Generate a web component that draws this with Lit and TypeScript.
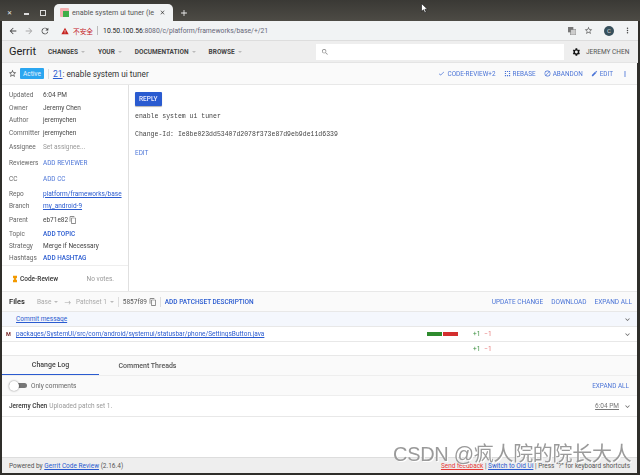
import { LitElement, css, html, svg } from 'lit'
import { customElement } from 'lit/decorators.js'

const icon = (d: string, size = 8, fill = 'currentColor') => html`
   <svg class="ico" width=${size} height=${size} viewBox="0 0 24 24" fill=${fill}>${svg`<path d=${d}></path>`}</svg>
`

const ICONS = {
   back: 'M20 11H7.8l5.6-5.6L12 4l-8 8 8 8 1.4-1.4L7.8 13H20z',
   forward: 'M4 11h12.2l-5.6-5.6L12 4l8 8-8 8-1.4-1.4 5.6-5.6H4z',
   reload: 'M17.6 6.4A8 8 0 1 0 19.7 14h-2.1a6 6 0 1 1-1.4-6.2L13 11h7V4z',
   star: 'M22 9.2l-7.2-.6L12 2 9.2 8.6 2 9.2l5.5 4.7L5.8 21l6.2-3.7 6.2 3.7-1.7-7.1zM12 15.4l-3.8 2.3 1-4.3-3.3-2.9 4.4-.4L12 6.1l1.7 4 4.4.4-3.3 2.9 1 4.3z',
   check: 'M9 16.2L4.8 12l-1.4 1.4L9 19 21 7l-1.4-1.4z',
   edit: 'M3 17.2V21h3.8L17.8 9.9l-3.7-3.7zM20.7 7a1 1 0 0 0 0-1.4l-2.3-2.3a1 1 0 0 0-1.4 0l-1.8 1.8 3.7 3.7z',
   ban: 'M12 2a10 10 0 1 0 0 20 10 10 0 0 0 0-20zM4 12a8 8 0 0 1 12.9-6.3L5.7 16.9A8 8 0 0 1 4 12zm8 8a8 8 0 0 1-4.9-1.7L18.3 7.1A8 8 0 0 1 12 20z',
   rebase: 'M3 3h4v4H3zm7 0h4v4h-4zm7 0h4v4h-4zM3 10h4v4H3zm14 0h4v4h-4zM3 17h4v4H3zm7 0h4v4h-4zm7 0h4v4h-4z',
   more: 'M12 8a2 2 0 1 0 0-4 2 2 0 0 0 0 4zm0 2a2 2 0 1 0 0 4 2 2 0 0 0 0-4zm0 6a2 2 0 1 0 0 4 2 2 0 0 0 0-4z',
   gear: 'M19.4 13a7.5 7.5 0 0 0 0-2l2.1-1.6-2-3.5-2.5 1a7.5 7.5 0 0 0-1.7-1L14.9 3h-4l-.4 2.9a7.5 7.5 0 0 0-1.7 1l-2.5-1-2 3.5L6.4 11a7.5 7.5 0 0 0 0 2l-2.1 1.6 2 3.5 2.5-1a7.5 7.5 0 0 0 1.7 1l.4 2.9h4l.4-2.9a7.5 7.5 0 0 0 1.7-1l2.5 1 2-3.5zM12.9 15.5a3.5 3.5 0 1 1 0-7 3.5 3.5 0 0 1 0 7z',
   search: 'M15.5 14h-.8l-.3-.3a6.5 6.5 0 1 0-.7.7l.3.3v.8l5 5 1.5-1.5zm-6 0a4.5 4.5 0 1 1 0-9 4.5 4.5 0 0 1 0 9z',
   copy: 'M16 1H4a2 2 0 0 0-2 2v14h2V3h12zm3 4H8a2 2 0 0 0-2 2v14a2 2 0 0 0 2 2h11a2 2 0 0 0 2-2V7a2 2 0 0 0-2-2zm0 16H8V7h11z',
   chevron: 'M7.4 8.6L12 13.2l4.6-4.6L18 10l-6 6-6-6z',
   hourglass: 'M6 2v6l4 4-4 4v6h12v-6l-4-4 4-4V2z',
   plus: 'M19 13h-6v6h-2v-6H5v-2h6V5h2v6h6z',
   close: 'M19 6.4L17.6 5 12 10.6 6.4 5 5 6.4 10.6 12 5 17.6 6.4 19 12 13.4 17.6 19 19 17.6 13.4 12z',
}

const NAV = ['CHANGES', 'YOUR', 'DOCUMENTATION', 'BROWSE']

const META_TOP = [
   { k: 'Updated', v: html`6:04 PM`, h: 12 },
   { k: 'Owner', v: html`Jeremy Chen`, h: 13 },
   { k: 'Author', v: html`jeremychen`, h: 12 },
   { k: 'Committer', v: html`jeremychen`, h: 13 },
   { k: 'Assignee', v: html`<span class="hint">Set assignee...</span>`, h: 15 },
   { k: 'Reviewers', v: html`<span class="action">ADD REVIEWER</span>`, h: 17 },
   { k: 'CC', v: html`<span class="action">ADD CC</span>`, h: 16 },
   { k: 'Repo', v: html`<span class="link">platform/frameworks/base</span>`, h: 13 },
   { k: 'Branch', v: html`<span class="link">my_android-9</span>`, h: 12 },
   { k: 'Parent', v: html`eb71e82 ${icon(ICONS.copy, 8, '#666')}`, h: 15 },
   { k: 'Topic', v: html`<span class="action strong">ADD TOPIC</span>`, h: 13 },
   { k: 'Strategy', v: html`Merge if Necessary`, h: 12 },
   { k: 'Hashtags', v: html`<span class="action strong">ADD HASHTAG</span>`, h: 12 },
]

@customElement('app-root')
export class AppRoot extends LitElement {

   renderChrome() {
      return html`
         <div class="titlebar">
            <div class="win-btns">
               <span class="win-x">✕</span>
               <span class="win-min"></span>
               <span class="win-max"></span>
            </div>
            <div class="tab">
               <svg class="favicon" width="9" height="9" viewBox="0 0 9 9">
                  <rect width="9" height="9" rx="1" fill="#f3b0b0"></rect>
                  <rect x="3" y="3" width="6" height="6" fill="#3fae49"></rect>
               </svg>
               <span class="tab-title">enable system ui tuner (le</span>
               ${icon(ICONS.close, 7, '#444')}
            </div>
            <span class="new-tab">${icon(ICONS.plus, 10, '#eee')}</span>
            <svg class="cursor" width="7" height="11" viewBox="0 0 7 11">
               <path d="M0.5 0.5v8l2-1.7 1.3 3 1.4-.6-1.3-3h2.6z" fill="#fff" stroke="#111" stroke-width=".6"></path>
            </svg>
         </div>
         <div class="toolbar">
            <span class="tb-ico">${icon(ICONS.back, 10, '#444')}</span>
            <span class="tb-ico">${icon(ICONS.forward, 10, '#aaa')}</span>
            <span class="tb-ico">${icon(ICONS.reload, 10, '#444')}</span>
            <svg class="warn" width="8" height="8" viewBox="0 0 24 24">
               <path d="M12 2L1 22h22z" fill="#c5221f"></path><rect x="11" y="9" width="2" height="7" fill="#fff"></rect><rect x="11" y="17" width="2" height="2" fill="#fff"></rect>
            </svg>
            <span class="insecure">不安全</span>
            <span class="url-sep"></span>
            <span class="url"><b>10.50.100.56</b>:8080/c/platform/frameworks/base/+/21</span>
            <span class="spacer"></span>
            <svg class="translate" width="8" height="8" viewBox="0 0 9 9">
               <rect width="6" height="6" fill="#777"></rect><rect x="3" y="3" width="6" height="6" fill="#ccc" stroke="#777" stroke-width=".6"></rect>
            </svg>
            ${icon(ICONS.star, 9, '#555')}
            <span class="avatar">C</span>
            ${icon(ICONS.more, 9, '#444')}
         </div>
      `
   }

   renderHeader() {
      return html`
         <header class="gerrit">
            <span class="brand">Gerrit</span>
            <nav class="nav">
               ${NAV.map(n => html`<span class="nav-item">${n}<i class="caret"></i></span>`)}
            </nav>
            <div class="search">${icon(ICONS.search, 8, '#888')}</div>
            ${icon(ICONS.gear, 10, '#111')}
            <span class="user">JEREMY CHEN</span>
         </header>
      `
   }

   renderChangeBar() {
      return html`
         <div class="changebar">
            ${icon(ICONS.star, 9, '#444')}
            <span class="active">Active</span>
            <span class="bar-sep"></span>
            <span class="subject"><span class="link big">21</span>: enable system ui tuner</span>
            <span class="spacer"></span>
            <div class="actions">
               <span>${icon(ICONS.check, 7)}CODE-REVIEW+2</span>
               <span>${icon(ICONS.rebase, 7, '#2a5bd0')}REBASE</span>
               <span>${icon(ICONS.ban, 7, '#2a5bd0')}ABANDON</span>
               <span>${icon(ICONS.edit, 7, '#2a5bd0')}EDIT</span>
               ${icon(ICONS.more, 8, '#2a5bd0')}
            </div>
         </div>
      `
   }

   renderMain() {
      return html`
         <section class="main">
            <aside class="meta">
               <div class="meta-rows">
                  ${META_TOP.map(r => html`
                     <div class="meta-row" style="height:${r.h}px">
                        <span class="meta-key">${r.k}</span>
                        <span class="meta-val">${r.v}</span>
                     </div>
                  `)}
               </div>
               <div class="labels">
                  ${icon(ICONS.hourglass, 8, '#f29900')}
                  <span class="label-name">Code-Review</span>
                  <span class="hint">No votes.</span>
               </div>
            </aside>
            <div class="message">
               <span class="reply">REPLY</span>
               <pre class="commit">enable system ui tuner</pre>
               <pre class="commit">Change-Id: Ie8be023dd53407d2078f373e87d9eb9de11d6339</pre>
               <span class="action">EDIT</span>
            </div>
         </section>
      `
   }

   renderFiles() {
      return html`
         <div class="files-head">
            <b class="files-title">Files</b>
            <span class="select">Base<i class="caret"></i></span>
            <span class="select arrow">→</span>
            <span class="select last">Patchset 1<i class="caret"></i></span>
            <span class="bar-sep"></span>
            <span class="sha">5857f89 ${icon(ICONS.copy, 8, '#666')}</span>
            <span class="bar-sep"></span>
            <span class="action strong">ADD PATCHSET DESCRIPTION</span>
            <span class="spacer"></span>
            <div class="file-actions">
               <span class="action">UPDATE CHANGE</span>
               <span class="action">DOWNLOAD</span>
               <span class="action">EXPAND ALL</span>
            </div>
         </div>
         <div class="file-row commit-row">
            <span class="link">Commit message</span>
            <span class="spacer"></span>
            ${icon(ICONS.chevron, 9, '#666')}
         </div>
         <div class="file-row">
            <b class="status">M</b>
            <span class="link">packages/SystemUI/src/com/android/systemui/statusbar/phone/SettingsButton.java</span>
            <span class="spacer"></span>
            <span class="delta"><i class="green"></i><i class="red"></i></span>
            <span class="counts"><span class="plus">+1</span><span class="minus">−1</span></span>
            ${icon(ICONS.chevron, 9, '#666')}
         </div>
         <div class="file-row total-row">
            <span class="spacer"></span>
            <span class="counts"><span class="plus">+1</span><span class="minus">−1</span></span>
         </div>
      `
   }

   renderLog() {
      return html`
         <div class="tabs">
            <span class="log-tab on">Change Log</span>
            <span class="log-tab">Comment Threads</span>
         </div>
         <div class="only">
            <span class="toggle"><i></i></span>
            <span>Only comments</span>
            <span class="spacer"></span>
            <span class="action">EXPAND ALL</span>
         </div>
         <div class="log-row">
            <b class="author">Jeremy Chen</b>
            <span class="hint">Uploaded patch set 1.</span>
            <span class="spacer"></span>
            <span class="time">6:04 PM</span>
            ${icon(ICONS.chevron, 9, '#666')}
         </div>
      `
   }

   render() {
      return html`
         <div class="window">
            <div class="page">
               ${this.renderChrome()}
               ${this.renderHeader()}
               ${this.renderChangeBar()}
               ${this.renderMain()}
               ${this.renderFiles()}
               ${this.renderLog()}
               <span class="spacer"></span>
               <footer class="foot">
                  <span>Powered by <span class="link">Gerrit Code Review</span> (2.16.4)</span>
                  <span class="spacer"></span>
                  <span class="foot-right"><span class="feedback">Send feedback</span> | <span class="link">Switch to Old UI</span> | Press “?” for keyboard shortcuts</span>
               </footer>
            </div>
            <div class="watermark">CSDN @疯人院的院长大人</div>
         </div>
      `
   }

   static styles = css`
   :host {
      display: block;
      width: 640px;
      height: 475px;
      background: #2f2e2a;
      font-family: Roboto, "Noto Sans CJK SC", sans-serif;
      font-size: 6.5px;
      color: #333;
      overflow: hidden;
   }
   * { box-sizing: border-box; }
   .window {
      position: relative;
      margin: 0 3px 2px 2px;
      height: 473px;
      background: #fff;
   }
   .page {
      height: 100%;
      display: flex;
      flex-direction: column;
      filter: blur(0.3px);
   }
   .spacer { flex: 1; }
   .ico { flex: none; display: block; }
   .titlebar {
      height: 21px;
      margin: 0 -3px 0 -2px;
      padding-top: 4px;
      display: flex;
      background: linear-gradient(#3a3935, #4d4b45);
      position: relative;
      flex: none;
   }
   .win-btns { width: 54px; display: flex; align-items: center; gap: 11px; padding-left: 7px; }
   .win-x { color: #eee; font-size: 6px; width: 6px; }
   .win-min { width: 5px; height: 1.5px; margin-top: 3px; background: #ddd; }
   .win-max { width: 6px; height: 6px; border: 1.5px solid #ddd; }
   .tab {
      width: 119px;
      background: #f1f3f4;
      border-radius: 5px 5px 0 0;
      display: flex;
      align-items: center;
      padding: 0 7px 0 6px;
      gap: 3px;
      font-size: 7.2px;
      color: #555;
   }
   .tab-title { flex: 1; white-space: nowrap; }
   .new-tab { margin-left: 6px; display: flex; align-items: center; }
   .cursor { position: absolute; left: 421px; top: 3px; }
   .toolbar {
      height: 20px;
      flex: none;
      background: #f1f3f4;
      display: flex;
      align-items: center;
      padding: 0 6px 0 6px;
      border-bottom: 1px solid #ddd;
      margin-right: -1px;
   }
   .tb-ico { width: 16px; display: flex; }
   .warn { margin-left: 5px; }
   .insecure { margin-left: 4px; color: #c5221f; font-size: 6.7px; }
   .url-sep { width: 1px; height: 9px; background: #bbb; margin: 0 5px 0 4px; }
   .url { font-size: 6.8px; color: #667; }
   .url b { font-weight: 400; color: #222; }
   .translate { margin-right: 8px; }
   .avatar {
      width: 10px; height: 10px; border-radius: 50%;
      background: #37505c; color: #ddd; font-size: 6px;
      display: flex; align-items: center; justify-content: center;
      margin: 0 9px 0 11px;
   }
   .gerrit {
      height: 22px;
      flex: none;
      background: #eee;
      display: flex;
      align-items: center;
      padding: 0 3px 0 7px;
      border-bottom: 1px solid #e4e4e4;
      margin-right: -1px;
   }
   .brand { font-size: 11px; color: #222; width: 39px; }
   .nav { display: flex; width: 268px; }
   .nav-item { font-size: 6.5px; font-weight: 700; color: #444; margin-right: 13px; white-space: nowrap; display: flex; align-items: center; }
   .caret {
      display: inline-block; width: 0; height: 0;
      border: 2.5px solid transparent; border-top: 2.5px solid #bbb; border-bottom: 0;
      margin-left: 3px;
   }
   .search {
      width: 248px; height: 16px; background: #fff;
      display: flex; align-items: center; padding-left: 5px; margin-right: 7px;
   }
   .user { font-size: 6.5px; color: #555; margin-left: 5px; white-space: nowrap; }
   .changebar {
      height: 22px;
      flex: none;
      display: flex;
      align-items: center;
      padding: 0 8px 0 6px;
      background: #fafafa;
      border-bottom: 1px solid #e8e8e8;
   }
   .active {
      background: #2ba6f0; color: #e8f4ff; font-size: 6.5px;
      padding: 1.5px 3px; border-radius: 1px; margin-left: 3px;
   }
   .bar-sep { width: 1px; height: 10px; background: #ddd; margin: 0 4px; flex: none; }
   .subject { font-size: 8.2px; color: #333; }
   .link { color: #2a5bd0; text-decoration: underline; }
   .big { font-size: 8.5px; }
   .actions { display: flex; align-items: center; gap: 8px; color: #2a5bd0; font-size: 6.4px; }
   .actions span { display: flex; align-items: center; gap: 2px; opacity: .85; }
   .main { height: 207px; flex: none; display: flex; border-bottom: 1px solid #e8e8e8; }
   .meta { width: 127px; flex: none; border-right: 1px solid #e0e0e0; display: flex; flex-direction: column; padding-top: 4px; }
   .meta-rows { padding: 0 0 0 7px; border-bottom: 1px solid #eee; height: 177px; }
   .meta-row { display: flex; align-items: center; }
   .meta-key { width: 34px; color: #666; flex: none; }
   .meta-val { color: #444; display: flex; align-items: center; gap: 1px; white-space: nowrap; }
   .hint { color: #999; }
   .action { color: #2a5bd0; font-size: 6.4px; opacity: .85; white-space: nowrap; }
   .strong { font-weight: 500; opacity: 1; }
   .labels { display: flex; align-items: center; padding: 0 14px 0 9px; flex: 1; gap: 1px; }
   .label-name { font-weight: 500; color: #333; flex: 1; }
   .message { flex: 1; padding: 7px 6px; display: flex; flex-direction: column; align-items: flex-start; }
   .reply {
      background: #2a5bd0; color: #eef; font-size: 6.5px; font-weight: 500;
      padding: 3px 4px; border-radius: 1px; box-shadow: 0 1px 1px rgba(0,0,0,.3);
      margin-bottom: 7px;
   }
   .commit {
      margin: 0 0 11px;
      font: 6.5px/7px "Liberation Mono", "DejaVu Sans Mono", monospace;
      color: #444;
   }
   .files-head {
      height: 20px; flex: none; display: flex; align-items: center;
      padding: 0 5px 0 7px; background: #fafafa; border-bottom: 1px solid #e8e8e8;
   }
   .files-head .bar-sep { margin: 0 4px 0 4px; }
   .files-head .action { font-size: 6.5px; }
   .files-title { font-size: 7.5px; color: #222; font-weight: 500; width: 28px; }
   .select { color: #aaa; display: flex; align-items: center; margin-right: 4px; }
   .select.last { margin-right: 0; }
   .arrow { margin-left: 2px; margin-right: 5px; }
   .sha { color: #555; display: flex; align-items: center; gap: 2px; width: 33px; }
   .file-actions { display: flex; gap: 8px; }
   .file-row {
      height: 15px; flex: none; display: flex; align-items: center;
      padding: 0 5px 0 14px; border-bottom: 1px solid #e8e8e8; position: relative;
   }
   .commit-row { background: #f4f7fd; }
   .status { position: absolute; left: 4px; color: #7a2a2a; font-size: 5.5px; }
   .delta { display: flex; gap: 1px; margin-right: 15px; }
   .delta i { display: block; width: 15px; height: 4px; }
   .green { background: #2e8b2e; }
   .red { background: #d32f2f; }
   .counts { display: flex; gap: 4px; width: 150px; font-size: 6.5px; }
   .plus { color: #388e3c; }
   .minus { color: #e57373; }
   .total-row { height: 14px; padding-right: 14px; }
   .tabs {
      height: 20px; flex: none; display: flex; background: #fafafa;
      border-bottom: 1px solid #eee;
   }
   .log-tab {
      width: 97px; display: flex; align-items: center; justify-content: center;
      font-size: 7px; font-weight: 500; color: #555;
   }
   .log-tab.on { border-bottom: 1px solid #2a5bd0; color: #444; }
   .only {
      height: 20px; flex: none; display: flex; align-items: center; gap: 4px;
      padding: 0 8px 0 7px; background: #fafafa; color: #666;
      border-bottom: 1px solid #eee;
   }
   .toggle { width: 18px; height: 5px; border-radius: 3px; background: #777; position: relative; }
   .toggle i {
      position: absolute; left: 0; top: -2.5px; width: 10px; height: 10px; border-radius: 50%;
      background: #fff; box-shadow: 0 0 2px rgba(0,0,0,.5);
   }
   .log-row {
      height: 21px; flex: none; display: flex; align-items: center; gap: 2px;
      padding: 0 5px 0 7px; border-bottom: 1px solid #e8e8e8;
   }
   .author { font-weight: 500; color: #333; }
   .time { color: #777; text-decoration: underline; margin-right: 2px; }
   .foot {
      height: 16px; flex: none; display: flex; align-items: center;
      padding: 0 7px 0 7px; background: #eee; color: #555; border-top: 1px solid #ddd;
   }
   .foot-right { white-space: nowrap; font-size: 6.45px; }
   .feedback { color: #e53935; text-decoration: underline; }
   .watermark {
      position: absolute; left: 391px; bottom: 6px;
      font: 20px "Liberation Sans", "Noto Sans CJK SC", sans-serif;
      color: #9a9a9a; text-shadow: 1px 1px 0 #fff;
      white-space: nowrap;
      letter-spacing: -.3px;
   }
   `
}

declare global {
   interface HTMLElementTagNameMap {
      'app-root': AppRoot
   }
}
